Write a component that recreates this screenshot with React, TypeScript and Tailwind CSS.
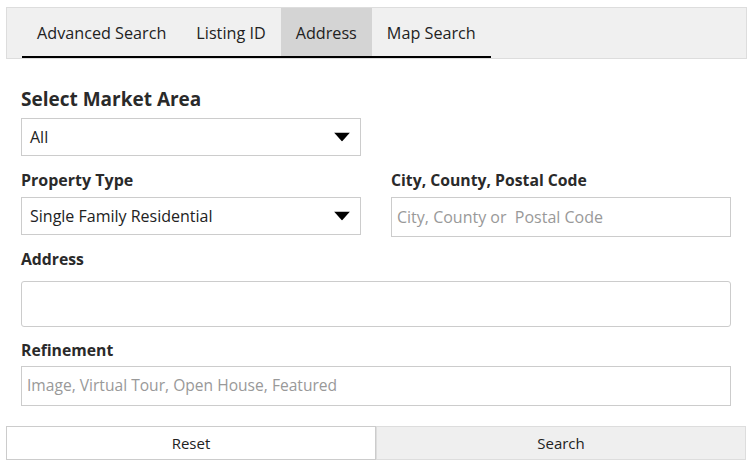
import React from "react";

const Arrow = () => (
  <svg width="16" height="9" viewBox="0 0 16 9" className="absolute right-[10px] top-1/2 -translate-y-1/2">
    <polygon points="0,0 16,0 8,9" fill="#000" />
  </svg>
);

export default function App() {
  const font = { fontFamily: '"Open Sans", "Liberation Sans", sans-serif' };
  return (
    <div className="w-[753px] h-[470px] bg-white text-[#222] overflow-hidden" style={font}>
      <div className="pt-[7px] pl-[6px] pr-[6px]">
        <div className="h-[52px] bg-[#f0f0f0] border border-[#dddddd] pl-[15px]">
          <div className="flex w-fit h-[50px] border-b-2 border-black text-[16.2px] text-[#222] whitespace-nowrap">
            <div className="shrink-0 px-[15px] pt-[3px] flex items-center">Advanced Search</div>
            <div className="shrink-0 px-[15px] pt-[3px] flex items-center">Listing ID</div>
            <div className="shrink-0 px-[15px] pt-[3px] flex items-center bg-[#d4d4d4]">Address</div>
            <div className="shrink-0 px-[15px] pt-[3px] flex items-center">Map Search</div>
          </div>
        </div>
      </div>
      <div className="pl-[21px] pr-[22px] flex flex-col">
        <div className="mt-[28px] text-[19px] leading-[24px] font-bold text-[#2a2a2a]">Select Market Area</div>
        <div className="mt-[7px] relative w-[340px] h-[38px] border border-[#cccccc] flex items-center pl-[8px] text-[16px] text-[#222]">
          All
          <Arrow />
        </div>
        <div className="mt-[14px] grid grid-cols-2 gap-x-[30px]">
          <div className="flex flex-col">
            <div className="text-[16px] leading-[20px] font-bold text-[#2a2a2a]">Property Type</div>
            <div className="mt-[7px] relative h-[38px] border border-[#cccccc] flex items-center pl-[8px] text-[16px] text-[#222]">
              Single Family Residential
              <Arrow />
            </div>
          </div>
          <div className="flex flex-col">
            <div className="text-[15.75px] leading-[20px] font-bold text-[#2a2a2a]">City, County, Postal Code</div>
            <div className="mt-[7px] h-[40px] border border-[#cccccc] flex items-center pl-[5px] text-[16px] text-[#999]">
              City, County or&nbsp; Postal Code
            </div>
          </div>
        </div>
        <div className="mt-[12px] text-[15.75px] leading-[20px] font-bold text-[#2a2a2a]">Address</div>
        <div className="mt-[12px] h-[46px] border border-[#cccccc] rounded-[3px]"></div>
        <div className="mt-[13px] text-[15.75px] leading-[20px] font-bold text-[#2a2a2a]">Refinement</div>
        <div className="mt-[6px] h-[40px] border border-[#cccccc] flex items-center pl-[5px] text-[15.6px] text-[#999]">
          Image, Virtual Tour, Open House, Featured
        </div>
      </div>
      <div className="mt-[20px] pl-[6px] pr-[7px] flex">
        <div className="flex-1 h-[34px] border border-[#cccccc] bg-white flex items-center justify-center text-[15px] text-[#222]">Reset</div>
        <div className="flex-1 h-[34px] border border-[#dddddd] bg-[#efefef] flex items-center justify-center text-[15px] text-[#222]">Search</div>
      </div>
    </div>
  );
}
